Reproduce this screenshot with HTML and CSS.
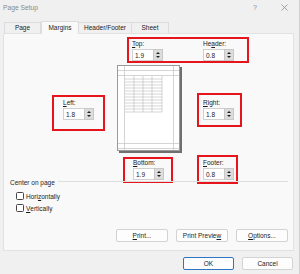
FILE: index.html
```html
<!DOCTYPE html>
<html lang="en">
<head>
    <meta charset="UTF-8">
    <title>Page Setup</title>
    <link rel="stylesheet" href="styles.css">
</head>
<body>
<div class="dialog">
    <div class="titlebar">
        <span class="title">Page Setup</span>
        <span class="help">?</span>
        <svg class="close" width="7" height="7" viewBox="0 0 7 7"><path d="M0.5 0.5L6.5 6.5M6.5 0.5L0.5 6.5" stroke="#8a8a8a" stroke-width="0.8"/></svg>
    </div>
    <ul class="tabs">
        <li class="tab-page">Page</li>
        <li class="tab-margins select">Margins</li>
        <li class="tab-hf">Header/Footer</li>
        <li class="tab-sheet">Sheet</li>
    </ul>
    <div class="panel">
        <!-- 上边距 / 页眉 -->
        <div class="row row-top">
            <div class="mark mark-top">
                <div class="field">
                    <label><u>T</u>op:</label>
                    <div class="spin"><span class="val">1.9</span><span class="arrows"><i class="up"></i><i class="down"></i></span></div>
                </div>
                <div class="field">
                    <label>He<u>a</u>der:</label>
                    <div class="spin"><span class="val">0.8</span><span class="arrows"><i class="up"></i><i class="down"></i></span></div>
                </div>
            </div>
        </div>
        <!-- 左右边距 + 预览 -->
        <div class="row row-mid">
            <div class="mark mark-left">
                <div class="field">
                    <label><u>L</u>eft:</label>
                    <div class="spin"><span class="val">1.8</span><span class="arrows"><i class="up"></i><i class="down"></i></span></div>
                </div>
            </div>
            <svg class="preview" width="65" height="88" viewBox="0 0 65 88">
                <rect x="2" y="2" width="63" height="86" fill="#6f6f6f"/>
                <rect x="0.5" y="0.5" width="62" height="85" fill="#fff" stroke="#9a9a9a"/>
                <g stroke="#c9c9c9" stroke-width="0.8">
                    <line x1="7.5" y1="1" x2="7.5" y2="85"/>
                    <line x1="56.5" y1="1" x2="56.5" y2="85"/>
                    <line x1="1" y1="5.5" x2="62" y2="5.5"/>
                    <line x1="1" y1="10.5" x2="62" y2="10.5"/>
                    <line x1="1" y1="78.5" x2="62" y2="78.5"/>
                    <line x1="1" y1="83.5" x2="62" y2="83.5"/>
                </g>
                <g stroke="#b9b9b9" stroke-width="0.6">
                    <line x1="17" y1="11" x2="17" y2="47"/>
                    <line x1="26" y1="11" x2="26" y2="47"/>
                    <line x1="35" y1="11" x2="35" y2="47"/>
                    <line x1="45" y1="11" x2="45" y2="47"/>
                    <line x1="8" y1="14" x2="45" y2="14"/>
                    <line x1="8" y1="17" x2="45" y2="17"/>
                    <line x1="8" y1="20" x2="45" y2="20"/>
                    <line x1="8" y1="23" x2="45" y2="23"/>
                    <line x1="8" y1="26" x2="45" y2="26"/>
                    <line x1="8" y1="29" x2="45" y2="29"/>
                    <line x1="8" y1="32" x2="45" y2="32"/>
                    <line x1="8" y1="35" x2="45" y2="35"/>
                    <line x1="8" y1="38" x2="45" y2="38"/>
                    <line x1="8" y1="41" x2="45" y2="41"/>
                    <line x1="8" y1="44" x2="45" y2="44"/>
                    <line x1="8" y1="47" x2="45" y2="47"/>
                </g>
            </svg>
            <div class="mark mark-right">
                <div class="field">
                    <label><u>R</u>ight:</label>
                    <div class="spin"><span class="val">1.8</span><span class="arrows"><i class="up"></i><i class="down"></i></span></div>
                </div>
            </div>
        </div>
        <!-- 下边距 / 页脚 -->
        <div class="row row-bottom">
            <div class="mark mark-bottom">
                <div class="field">
                    <label><u>B</u>ottom:</label>
                    <div class="spin"><span class="val">1.9</span><span class="arrows"><i class="up"></i><i class="down"></i></span></div>
                </div>
            </div>
            <div class="mark mark-footer">
                <div class="field">
                    <label><u>F</u>ooter:</label>
                    <div class="spin"><span class="val">0.8</span><span class="arrows"><i class="up"></i><i class="down"></i></span></div>
                </div>
            </div>
        </div>
        <div class="group">
            <div class="legend"><span>Center on page</span><span class="line"></span></div>
            <div class="check"><span class="box"></span>Hori<u>z</u>ontally</div>
            <div class="check"><span class="box"></span><u>V</u>ertically</div>
        </div>
        <div class="btns">
            <span class="btn"><u>P</u>rint...</span>
            <span class="btn">Print Previe<u>w</u></span>
            <span class="btn"><u>O</u>ptions...</span>
        </div>
    </div>
    <div class="footer-btns">
        <span class="btn default">OK</span>
        <span class="btn">Cancel</span>
    </div>
</div>
</body>
</html>
```
FILE: styles.css
```css
* {
    margin: 0;
    padding: 0;
    box-sizing: border-box;
}

body {
    width: 300px;
    height: 274px;
    overflow: hidden;
    background-color: #f0f0f0;
    font-family: "Liberation Sans", Arial, sans-serif;
    font-size: 6.5px;
    color: #1b1b1b;
}

u {
    text-decoration-thickness: 0.5px;
    text-underline-offset: 1px;
}

.dialog {
    width: 300px;
    height: 274px;
    border-right: 1px solid #d2d2d2;
}

.titlebar {
    height: 14px;
    display: flex;
    align-items: center;
    padding-left: 3px;
    color: #8a8a8a;
}

.title {
    font-size: 6.7px;
}

.help {
    margin-left: auto;
    font-size: 7px;
}

.close {
    margin-left: 24px;
    margin-right: 11px;
}

ul {
    list-style: none;
}

.tabs {
    display: flex;
    align-items: flex-end;
    height: 12px;
    margin-top: 7px;
    padding-left: 4px;
    position: relative;
    z-index: 1;
}

.tabs li {
    height: 11px;
    line-height: 10px;
    text-align: center;
    border: 1px solid #dcdcdc;
    border-bottom: none;
    background-color: #f0f0f0;
}

.tabs li + li {
    border-left: none;
}

.tabs .tab-page { width: 37px; }
.tabs .tab-margins { width: 38px; }
.tabs .tab-hf { width: 53px; }
.tabs .tab-sheet { width: 37px; }

.tabs li.select {
    height: 13px;
    margin-bottom: -1px;
    line-height: 12px;
    background-color: #f9f9f9;
    border-left: 1px solid #dcdcdc;
}

.panel {
    width: 291px;
    height: 218px;
    margin-left: 3px;
    border: 1px solid #e2e2e2;
    background-color: #f9f9f9;
}

.row {
    display: flex;
    align-items: flex-start;
}

.row-top {
    margin-top: 3px;
    padding-left: 123px;
}

.row-mid {
    margin-top: 2px;
    padding-left: 48px;
}

.row-bottom {
    margin-top: 2px;
    padding-left: 119px;
    height: 26px;
}

.mark {
    border: 2px solid #e8141c;
    display: flex;
}

.mark-top {
    width: 122px;
    height: 26px;
    padding: 1px 0 0 3px;
    gap: 40px;
}

.mark-left {
    width: 53px;
    height: 36px;
    margin-top: 30px;
    padding: 2px 0 0 9px;
}

.preview {
    display: block;
    margin-left: 12px;
}

.mark-right {
    width: 45px;
    height: 34px;
    margin-top: 28px;
    margin-left: 15px;
    padding: 4px 0 0 4px;
}

.mark-bottom {
    width: 50px;
    height: 26px;
    margin-top: 2px;
    padding: 0 0 0 8px;
}

.mark-footer {
    width: 41px;
    height: 29px;
    margin-left: 24px;
    padding: 2px 0 0 4px;
}

.field label {
    display: block;
    height: 8px;
    line-height: 8px;
}

.spin {
    display: flex;
    width: 31px;
    height: 12px;
    margin-top: 1px;
}

.spin .val {
    width: 21px;
    height: 12px;
    line-height: 11px;
    padding-left: 2px;
    background-color: #fff;
    border: 1px solid #d0d0d0;
    border-right: none;
}

.spin .arrows {
    width: 10px;
    height: 12px;
    display: flex;
    flex-direction: column;
    justify-content: space-around;
    align-items: center;
    padding: 1px 0;
    background-color: #dcdcdc;
    border: 1px solid #c8c8c8;
}

.arrows i {
    width: 0;
    height: 0;
    border-left: 2px solid transparent;
    border-right: 2px solid transparent;
}

.arrows .up {
    border-bottom: 2px solid #222;
}

.arrows .down {
    border-top: 2px solid #222;
}

.group {
    margin-top: -3px;
    padding-left: 6px;
}

.legend {
    display: flex;
    align-items: center;
    height: 8px;
    padding-right: 5px;
}

.legend .line {
    flex: 1;
    height: 1px;
    margin-left: 3px;
    margin-top: -1px;
    background-color: #dedede;
}

.check {
    display: flex;
    align-items: center;
    height: 8px;
    margin-left: 6px;
    margin-top: 4px;
}

.group .legend + .check {
    margin-top: 6px;
}

.check .box {
    width: 8px;
    height: 8px;
    margin-right: 2px;
    border: 1px solid #444;
    border-radius: 1.5px;
    background-color: #fff;
}

.btns {
    display: flex;
    justify-content: flex-end;
    gap: 8px;
    margin-top: 17px;
    padding-right: 5px;
}

.btn {
    display: block;
    width: 52px;
    height: 13px;
    line-height: 11px;
    text-align: center;
    background-color: #fdfdfd;
    border: 1px solid #d3d3d3;
    border-radius: 2px;
}

.footer-btns {
    display: flex;
    justify-content: flex-end;
    gap: 8px;
    margin-top: 6px;
    padding-right: 6px;
}

.footer-btns .btn {
    width: 51px;
}

.footer-btns .btn.default {
    border-color: #2f73c4;
}
```
